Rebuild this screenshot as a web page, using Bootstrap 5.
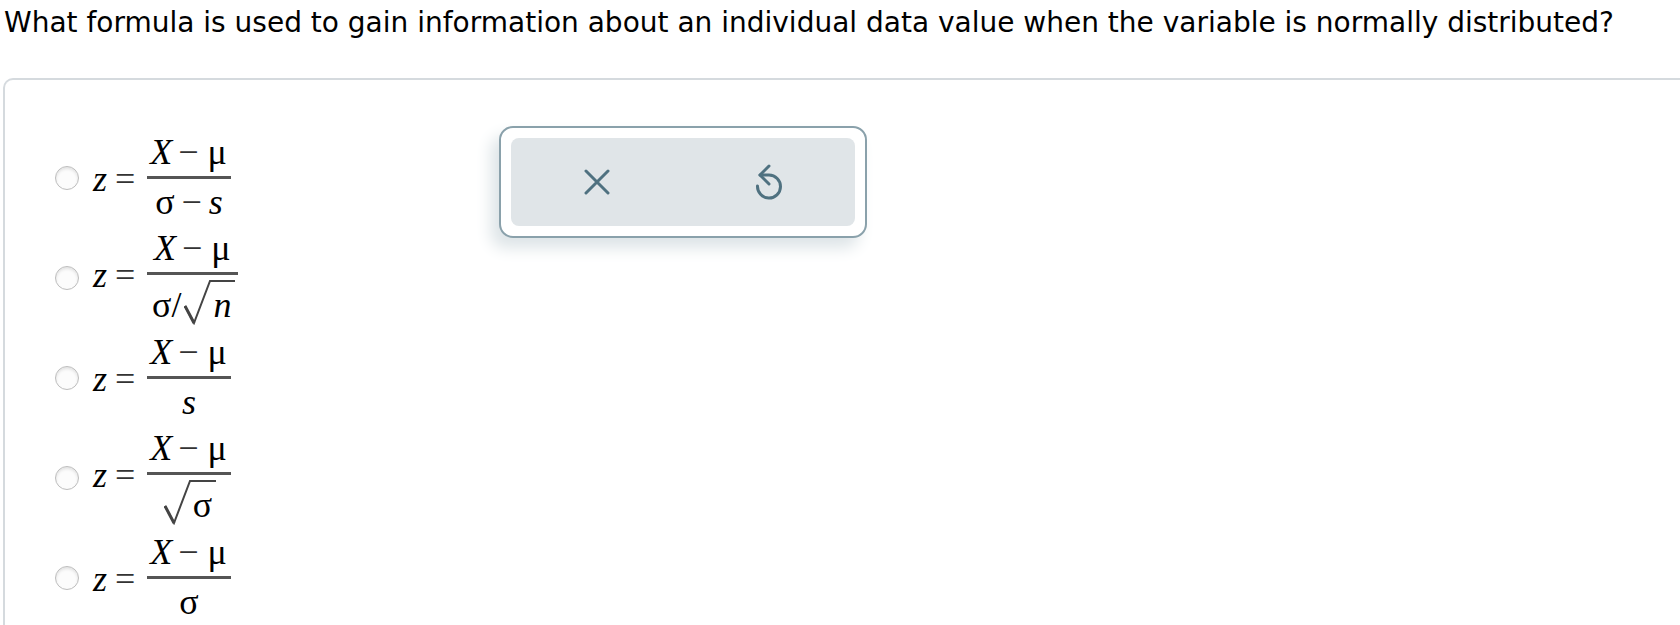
<!DOCTYPE html>
<html lang="en">
<head>
<meta charset="utf-8">
<meta name="viewport" content="width=device-width, initial-scale=1">
<title>Question</title>
<link href="https://cdn.jsdelivr.net/npm/bootstrap@5.3.0/dist/css/bootstrap.min.css" rel="stylesheet">
<style>
  body { background: #fff; color: #000; font-family: "DejaVu Sans", Verdana, sans-serif; }
  .question { font-size: 28px; line-height: 46px; }
  .answer-panel { border: 2px solid #d5dade; border-right: 0; border-bottom: 0; border-top-left-radius: 10px; margin: 32px 0 0 3px; padding: 48px 24px 0 50px; }
  .choices { width: 444px; }
  .choice { min-height: 100px; gap: 12px; }
  .choice .form-check-input { width: 24px; height: 24px; margin: 0; flex: none; border: 1px solid #bdbdbd; background-color: #fcfcfc; box-shadow: inset 0 2px 3px #e2e2e2; }
  .choice .form-check-input:checked { background-color: #4f7180; }
  .formula { font-family: "Liberation Serif", "Times New Roman", serif; font-size: 36px; line-height: 36px; }
  .lhs { padding: 28px 0 0 2px; gap: 8px; width: 56px; }
  .num { padding: 1px 4px 6px 3px; }
  .frac { min-width: 84px; }
  .vinculum { height: 3px; background: #555; }
  .den { padding: 5px 4px 4px; }
  .den-root { padding: 5px 3px 2px 5px; }
  .pre-root { padding-top: 7px; margin-right: 3px; }
  .op { color: #333; }
  .num .op { margin: 0 9px 0 6px; }
  .den .op { margin: 0 7px; }
  .radical { width: 27px; height: 45px; margin-right: -1px; }
  .radicand { border-top: 2px solid #444; padding: 5px 4px 0 3px; }
  .tools { width: 368px; max-width: 100%; height: 112px; margin-top: -2px; padding: 10px; border: 2px solid #8aa1ab; border-radius: 14px; background: #fff; box-shadow: -8px 10px 16px #dde4e7; }
  .tool-strip { background: #e0e5e8; border-radius: 8px; }
  .tool-strip .btn { border: 0; color: #4f7180; }
</style>
</head>
<body>
<main class="overflow-hidden">
  <p class="question mb-0 ps-1">What formula is used to gain information about an individual data value when the variable is normally distributed?</p>
  <form class="answer-panel d-flex flex-wrap align-items-start">
    <div class="choices" role="radiogroup" aria-label="Formula">
      <div class="choice d-flex align-items-center">
        <input class="form-check-input" type="radio" name="formula" id="f1">
        <label class="formula d-flex align-items-start" for="f1">
          <span class="lhs d-flex"><i>z</i><span class="op">=</span></span>
          <span class="frac d-flex flex-column">
            <span class="num d-flex justify-content-center"><i>X</i><span class="op">−</span><span>μ</span></span>
            <span class="vinculum"></span>
            <span class="den d-flex justify-content-center"><span>σ</span><span class="op">−</span><i>s</i></span>
          </span>
        </label>
      </div>
      <div class="choice d-flex align-items-center">
        <input class="form-check-input" type="radio" name="formula" id="f2">
        <label class="formula d-flex align-items-start" for="f2">
          <span class="lhs d-flex"><i>z</i><span class="op">=</span></span>
          <span class="frac d-flex flex-column">
            <span class="num d-flex justify-content-center"><i>X</i><span class="op">−</span><span>μ</span></span>
            <span class="vinculum"></span>
            <span class="den-root d-flex justify-content-center align-items-start">
              <span class="pre-root">σ/</span>
              <svg class="radical" viewBox="0 0 27 45" fill="none" stroke="#444" stroke-width="2" aria-hidden="true"><path d="M1 26L10 43L26 1H27"/><path d="M1 26L10 43" stroke-width="3"/></svg>
              <i class="radicand">n</i>
            </span>
          </span>
        </label>
      </div>
      <div class="choice d-flex align-items-center">
        <input class="form-check-input" type="radio" name="formula" id="f3">
        <label class="formula d-flex align-items-start" for="f3">
          <span class="lhs d-flex"><i>z</i><span class="op">=</span></span>
          <span class="frac d-flex flex-column">
            <span class="num d-flex justify-content-center"><i>X</i><span class="op">−</span><span>μ</span></span>
            <span class="vinculum"></span>
            <span class="den d-flex justify-content-center"><i>s</i></span>
          </span>
        </label>
      </div>
      <div class="choice d-flex align-items-center">
        <input class="form-check-input" type="radio" name="formula" id="f4">
        <label class="formula d-flex align-items-start" for="f4">
          <span class="lhs d-flex"><i>z</i><span class="op">=</span></span>
          <span class="frac d-flex flex-column">
            <span class="num d-flex justify-content-center"><i>X</i><span class="op">−</span><span>μ</span></span>
            <span class="vinculum"></span>
            <span class="den-root d-flex justify-content-center align-items-start">
              <svg class="radical" viewBox="0 0 27 45" fill="none" stroke="#444" stroke-width="2" aria-hidden="true"><path d="M1 26L10 43L26 1H27"/><path d="M1 26L10 43" stroke-width="3"/></svg>
              <span class="radicand">σ</span>
            </span>
          </span>
        </label>
      </div>
      <div class="choice d-flex align-items-center">
        <input class="form-check-input" type="radio" name="formula" id="f5">
        <label class="formula d-flex align-items-start" for="f5">
          <span class="lhs d-flex"><i>z</i><span class="op">=</span></span>
          <span class="frac d-flex flex-column">
            <span class="num d-flex justify-content-center"><i>X</i><span class="op">−</span><span>μ</span></span>
            <span class="vinculum"></span>
            <span class="den d-flex justify-content-center"><span>σ</span></span>
          </span>
        </label>
      </div>
    </div>
    <div class="tools">
      <div class="tool-strip d-flex h-100">
        <button type="button" class="btn flex-fill w-50 p-0 d-flex align-items-center justify-content-center" aria-label="Clear">
          <svg width="26" height="26" viewBox="0 0 26 26" fill="none" stroke="currentColor" stroke-width="3" stroke-linecap="round" aria-hidden="true"><path d="M2 2L24 24M24 2L2 24"/></svg>
        </button>
        <button type="button" class="btn flex-fill w-50 p-0 d-flex align-items-center justify-content-center" aria-label="Reset">
          <svg width="28" height="36" viewBox="0 0 28 36" fill="none" stroke="currentColor" stroke-width="3" stroke-linecap="round" stroke-linejoin="round" aria-hidden="true"><path d="M14 2L5 11L14 20"/><path d="M5 11H14A11.5 11.5 0 1 1 2.500 22"/></svg>
        </button>
      </div>
    </div>
  </form>
</main>
<script src="https://cdn.jsdelivr.net/npm/bootstrap@5.3.0/dist/js/bootstrap.bundle.min.js"></script>
</body>
</html>
